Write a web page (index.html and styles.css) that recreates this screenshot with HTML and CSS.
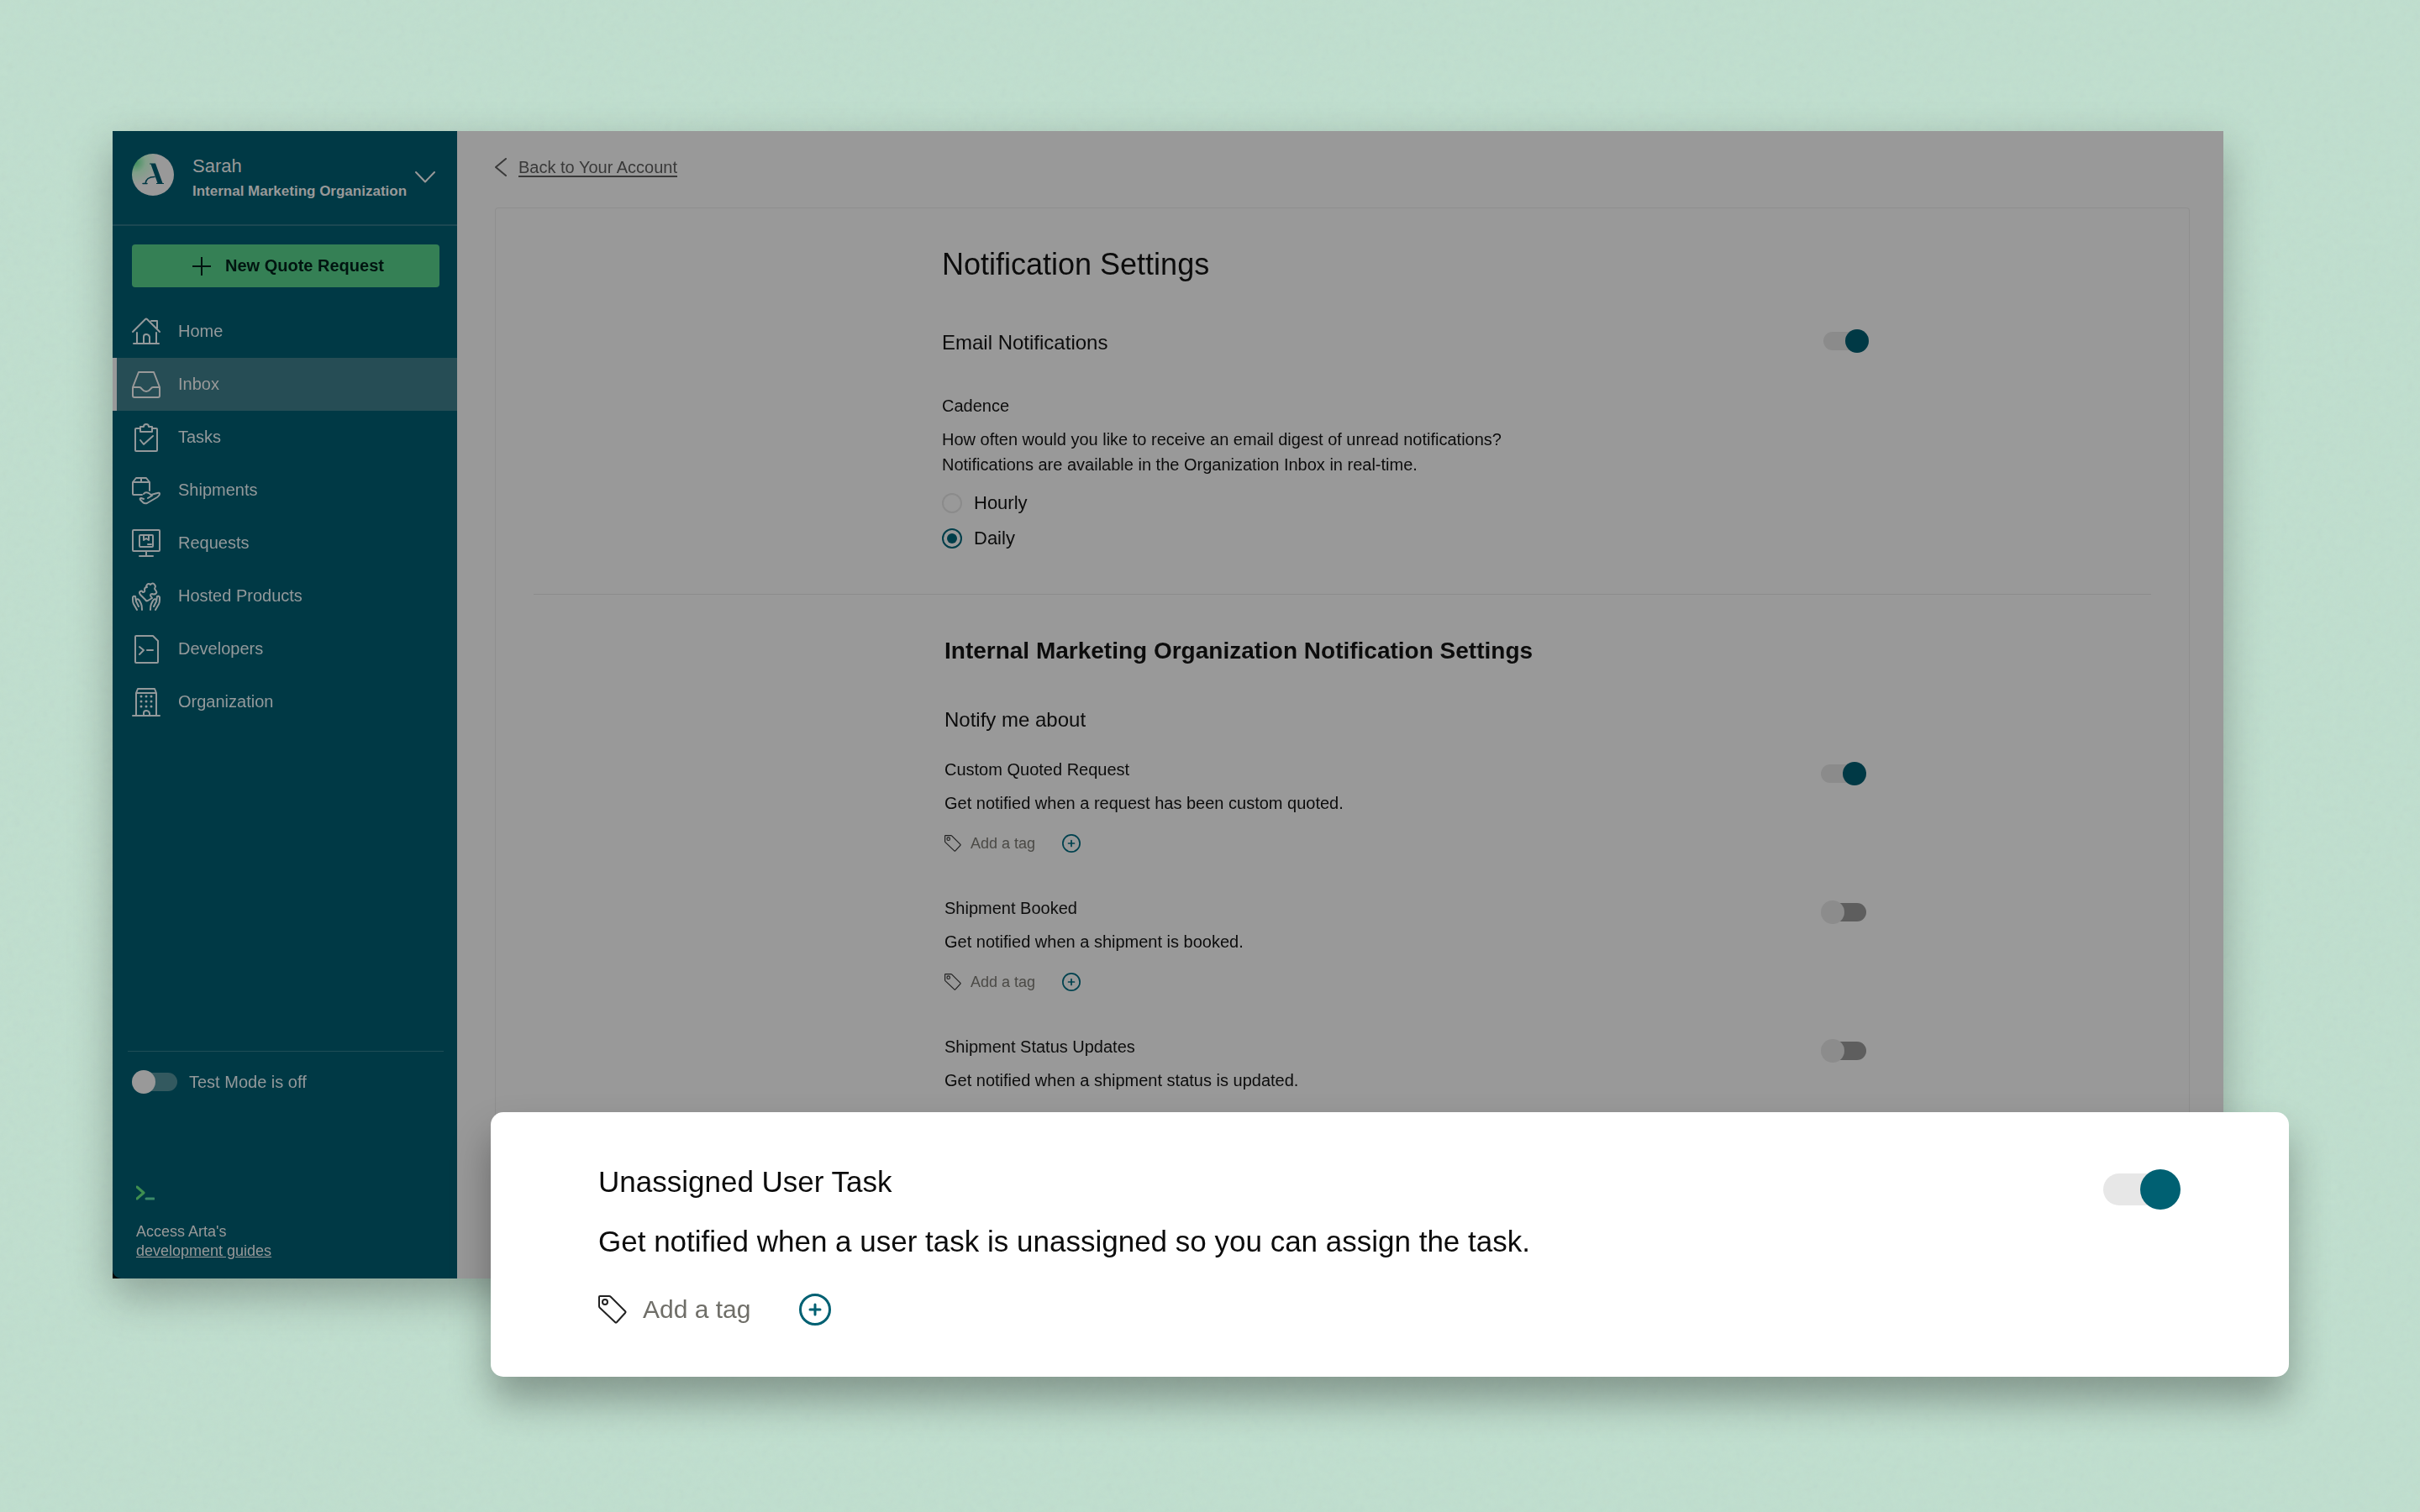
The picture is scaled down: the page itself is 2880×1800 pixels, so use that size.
FILE: index.html
```html
<!DOCTYPE html>
<html lang="en">
<head>
    <meta charset="UTF-8">
    <meta name="viewport" content="width=device-width, initial-scale=1.0">
    <title>Arta - Notification Settings</title>
    <link rel="stylesheet" href="styles.css">
</head>
<body>
    <!-- Paper grain -->
    <svg class="paper" aria-hidden="true">
        <filter id="grain">
            <feTurbulence type="fractalNoise" baseFrequency="0.12" numOctaves="3" stitchTiles="stitch"/>
            <feColorMatrix type="saturate" values="0.4"/>
        </filter>
        <rect width="100%" height="100%" filter="url(#grain)"/>
    </svg>

    <!-- Shared icons -->
    <svg class="sprite" aria-hidden="true">
        <symbol id="icon-tag" viewBox="0 0 34 34">
            <path d="M1 2q0-1 1-1h11q1 0 2 1l17 17q1 1 0 2L22 32q-1 1-2 0L2 15q-1-1-1-2z"/>
            <circle cx="8" cy="8" r="3"/>
        </symbol>
        <symbol id="icon-add" viewBox="0 0 38 38">
            <circle cx="19" cy="19" r="17.500"/>
            <path d="M19 13v12M13 19h12"/>
        </symbol>
    </svg>

    <div class="window">
        <!-- Sidebar -->
        <aside class="sidebar">
            <button class="account" type="button">
                <svg class="avatar" viewBox="0 0 50 50" aria-hidden="true">
                    <defs>
                        <radialGradient id="avatarFill" cx="0.08" cy="0.2" r="0.55">
                            <stop offset="0" stop-color="#3f8f5c"/>
                            <stop offset="0.45" stop-color="#7f9f88"/>
                            <stop offset="1" stop-color="#999999"/>
                        </radialGradient>
                    </defs>
                    <circle cx="25" cy="25" r="25" fill="url(#avatarFill)"/>
                    <path d="M21 11.500h7l8.500 23.500h1.500v1h-9v-1h1.500l-8-22.500h-1.500z" fill="#003945"/>
                    <path d="M16 35.500q1-8 11-8M13 35.500h5" fill="none" stroke="#003945" stroke-width="1.500"/>
                </svg>
                <span class="account-text">
                    <span class="account-name">Sarah</span>
                    <span class="account-org">Internal Marketing Organization</span>
                </span>
                <svg class="account-arrow" viewBox="0 0 24 14" aria-hidden="true"><path d="M1 1l11 11.500L23 1"/></svg>
            </button>

            <button class="new-quote" type="button">
                <svg viewBox="0 0 22 22" aria-hidden="true"><path d="M11 0v22M0 11h22"/></svg>
                New Quote Request
            </button>

            <nav class="nav">
                <a href="#home">
                    <svg viewBox="0 0 34 34" aria-hidden="true"><path d="M1 17L16 2q1-1 2 0l15 15M23 4h7v9M6 18v12M29 18v12M2 31h30M14 31v-8q0-3 3-3t4 3v8"/></svg>
                    Home
                </a>
                <a href="#inbox" class="active">
                    <svg viewBox="0 0 34 34" aria-hidden="true"><path d="M8 2h18l7 18v10q0 2-2 2H3q-2 0-2-2V20zM1 20h8c3 0 3 5 8 5s5-5 8-5h8"/></svg>
                    Inbox
                </a>
                <a href="#tasks">
                    <svg viewBox="0 0 34 34" aria-hidden="true"><path d="M9 6H5q-1 0-1 1v25q0 1 1 1h24q1 0 1-1V7q0-1-1-1h-4M10 4h4q0-3 3-3t3 3h4v6H10zM10 20l4 5 11-10"/></svg>
                    Tasks
                </a>
                <a href="#shipments">
                    <svg viewBox="0 0 34 34" aria-hidden="true"><path d="M12 22H2q-1 0-1-1V7l4-5h12l4 5v10M1 7h20M11 2v5M14 21q2-3 6-1l4 3-5 3M23 22l7-2q3-1 3 1t-3 4l-12 7q-3 1-5-1l-3-3q-1-2 1-2l3 1"/></svg>
                    Shipments
                </a>
                <a href="#requests">
                    <svg viewBox="0 0 34 34" aria-hidden="true"><rect x="1" y="1" width="32" height="25" rx="1"/><rect x="9" y="7" width="16" height="14" rx="1"/><path d="M14 7v6l3-2 3 2V7M19 18h4M17 26v6M9 32h16"/></svg>
                    Requests
                </a>
                <a href="#hosted-products">
                    <svg viewBox="0 0 34 34" aria-hidden="true"><path d="M17 5l1-2q2-2 4 0 3-3 5 0l1 2-1 3 2 3q1 2-1 3t-4 0q-2 0-2 2l2 3-5 3q-2 1-3-1l-6-6q-2-3 0-4 2-1 3 1 3 0 2-3 0-3 3-3zM6 33l-4-7q-1-2-1-5v-3q1-2 3-1l1 6 3 6M5 21q2-2 4 1l2 4q1 2 1 7M28 33l4-7q1-2 1-5v-3q-1-2-3-1l-1 6-3 6M29 21q-2-2-4 1l-2 4q-1 2-1 7"/></svg>
                    Hosted Products
                </a>
                <a href="#developers">
                    <svg viewBox="0 0 34 34" aria-hidden="true"><path d="M5 1h20l6 6v25q0 1-1 1H5q-1 0-1-1V2q0-1 1-1zM9 14l5 4-5 5M18 18h7"/></svg>
                    Developers
                </a>
                <a href="#organization">
                    <svg viewBox="0 0 34 34" aria-hidden="true"><path d="M5 33V6l2-5h20l2 5v27M5 6h24M1 33h32M14 33v-3q0-3 3-3t4 3v3"/><path class="windows" d="M11 10h0M17 10h0M23 10h0M11 16h0M17 16h0M23 16h0M11 22h0M17 22h0M23 22h0"/></svg>
                    Organization
                </a>
            </nav>

            <div class="sidebar-footer">
                <label class="test-mode">
                    <input type="checkbox" class="toggle">
                    Test Mode is off
                </label>
                <svg class="prompt" viewBox="0 0 22 18" aria-hidden="true"><path d="M1 2l8 7-8 7" stroke="#3f8f50"/><path d="M12 16h9" stroke="#3c8a69"/></svg>
                <p class="guides">Access Arta's<br><a href="#guides">development guides</a></p>
            </div>
        </aside>

        <!-- Settings page -->
        <main class="main">
            <a class="back" href="#account">
                <svg viewBox="0 0 14 22" aria-hidden="true"><path d="M13 1L1 11l12 10"/></svg>
                <span>Back to Your Account</span>
            </a>

            <div class="card">
                <section class="personal">
                    <h1>Notification Settings</h1>
                    <div class="row">
                        <label for="email">Email Notifications</label>
                        <input type="checkbox" class="toggle" id="email" checked>
                    </div>
                    <h3>Cadence</h3>
                    <p class="cadence-text">How often would you like to receive an email digest of unread notifications?<br>Notifications are available in the Organization Inbox in real-time.</p>
                    <div class="radios">
                        <label><input type="radio" name="cadence"> Hourly</label>
                        <label><input type="radio" name="cadence" checked> Daily</label>
                    </div>
                </section>

                <hr>

                <section class="organization">
                    <h2>Internal Marketing Organization Notification Settings</h2>
                    <p class="about">Notify me about</p>

                    <div class="item">
                        <div>
                            <label for="quoted">Custom Quoted Request</label>
                            <p>Get notified when a request has been custom quoted.</p>
                            <div class="tags">
                                <svg class="tag-icon" aria-hidden="true"><use href="#icon-tag"/></svg>
                                <span>Add a tag</span>
                                <button type="button" aria-label="Add a tag"><svg aria-hidden="true"><use href="#icon-add"/></svg></button>
                            </div>
                        </div>
                        <input type="checkbox" class="toggle" id="quoted" checked>
                    </div>

                    <div class="item">
                        <div>
                            <label for="booked">Shipment Booked</label>
                            <p>Get notified when a shipment is booked.</p>
                            <div class="tags">
                                <svg class="tag-icon" aria-hidden="true"><use href="#icon-tag"/></svg>
                                <span>Add a tag</span>
                                <button type="button" aria-label="Add a tag"><svg aria-hidden="true"><use href="#icon-add"/></svg></button>
                            </div>
                        </div>
                        <input type="checkbox" class="toggle" id="booked">
                    </div>

                    <div class="item">
                        <div>
                            <label for="status">Shipment Status Updates</label>
                            <p>Get notified when a shipment status is updated.</p>
                        </div>
                        <input type="checkbox" class="toggle" id="status">
                    </div>
                </section>
            </div>
        </main>

        <!-- Highlighted setting, floats over the window -->
        <div class="popup">
            <div>
                <label for="unassigned">Unassigned User Task</label>
                <p>Get notified when a user task is unassigned so you can assign the task.</p>
                <div class="tags">
                    <svg class="tag-icon" aria-hidden="true"><use href="#icon-tag"/></svg>
                    <span>Add a tag</span>
                    <button type="button" aria-label="Add a tag"><svg aria-hidden="true"><use href="#icon-add"/></svg></button>
                </div>
            </div>
            <input type="checkbox" class="toggle" id="unassigned" checked>
        </div>
    </div>
</body>
</html>
```

FILE: styles.css
```css
/* Base Styles */
* {
    box-sizing: border-box;
}

body {
    margin: 0;
    padding: 156px 234px 278px 134px;
    min-height: 100vh;
    display: flex;
    font-family: "Liberation Sans", Arial, sans-serif;
    font-size: 20px;
    color: #0c0c0c;
    background: #c0dfcf;
}

h1, h2, h3, p {
    margin: 0;
    font-weight: 400;
}

a {
    color: inherit;
}

button {
    font: inherit;
    border: none;
    padding: 0;
    background: none;
    cursor: pointer;
}

svg {
    display: block;
    fill: none;
    stroke: currentColor;
    stroke-width: 2;
    stroke-linecap: round;
    stroke-linejoin: round;
}

.paper {
    position: fixed;
    top: 0;
    left: 0;
    width: 100%;
    height: 100%;
    z-index: -1;
    opacity: 0.06;
    stroke: none;
}

.sprite {
    position: absolute;
    width: 0;
    height: 0;
}

/* App window */
.window {
    position: relative;
    flex: 1;
    display: flex;
    background: #000;
    box-shadow: 0 20px 48px rgba(0, 0, 0, 0.28);
}

/* Sidebar */
.sidebar {
    width: 410px;
    flex-shrink: 0;
    display: flex;
    flex-direction: column;
    background: #003945;
    color: #93999b;
    border-bottom-left-radius: 10px;
}

.account {
    display: flex;
    align-items: flex-start;
    height: 113px;
    padding: 27px 26px 0 23px;
    color: #999;
    text-align: left;
    border-bottom: 2px solid #1b4852;
}

.avatar {
    width: 50px;
    height: 50px;
    margin-right: 22px;
    stroke: none;
}

.account-text {
    flex: 1;
    display: flex;
    flex-direction: column;
    gap: 3px;
}

.account-name {
    font-size: 22px;
    line-height: 30px;
}

.account-org {
    font-size: 17px;
    line-height: 24px;
    font-weight: 700;
    white-space: nowrap;
}

.account-arrow {
    width: 24px;
    height: 56px;
}

.new-quote {
    display: flex;
    align-items: center;
    justify-content: center;
    gap: 17px;
    height: 51px;
    margin: 22px 21px 21px 23px;
    padding-left: 6px;
    border-radius: 4px;
    background: #358055;
    color: #001410;
    font-weight: 700;
}

.new-quote svg {
    width: 22px;
    height: 22px;
}

.nav a {
    display: flex;
    align-items: center;
    gap: 21px;
    height: 63px;
    padding-left: 23px;
    text-decoration: none;
}

.nav svg {
    width: 34px;
    height: 34px;
}

.nav .windows {
    stroke-width: 3;
}

.nav .active {
    padding-left: 18px;
    border-left: 5px solid #999;
    background: #264d55;
    color: #999;
}

.sidebar-footer {
    margin: auto 16px 0 18px;
    padding: 22px 5px 21px;
    border-top: 1px solid #1f4d57;
}

.test-mode {
    display: flex;
    align-items: center;
    gap: 14px;
    margin-bottom: 109px;
}

.prompt {
    width: 22px;
    height: 18px;
    margin: 0 5px 26px;
    stroke-width: 3;
}

.guides {
    margin: 0 5px;
    font-size: 18px;
    line-height: 23px;
    color: #999;
}

/* Main */
.main {
    flex: 1;
    display: flex;
    flex-direction: column;
    padding: 31px 40px 0 45px;
    background: #999;
}

.back {
    display: flex;
    align-items: center;
    align-self: flex-start;
    gap: 14px;
    line-height: 24px;
    margin-bottom: 36px;
    color: #393939;
    text-decoration: none;
}

.back svg {
    width: 14px;
    height: 22px;
}

.back span {
    text-decoration: underline;
    text-underline-offset: 3px;
}

.card {
    flex: 1;
    border: 1px solid #8f8f8f;
    border-bottom: none;
    border-radius: 4px 4px 0 0;
}

.card hr {
    height: 1px;
    margin: 0 45px;
    border: none;
    background: #8c8c8c;
}

.personal {
    padding: 45px 381px 50px 531px;
}

h1 {
    font-size: 36px;
    line-height: 44px;
    margin-bottom: 55px;
}

.row {
    display: flex;
    justify-content: space-between;
    margin-bottom: 44px;
    font-size: 24px;
    line-height: 32px;
}

h3 {
    font-size: 20px;
    line-height: 30px;
    margin-bottom: 10px;
}

.cadence-text {
    line-height: 30px;
    margin-bottom: 15px;
}

.radios {
    display: flex;
    flex-direction: column;
    gap: 10px;
    font-size: 22px;
    line-height: 32px;
}

.radios label {
    display: flex;
    align-items: center;
    gap: 14px;
}

.radios input {
    appearance: none;
    display: grid;
    place-items: center;
    width: 24px;
    height: 24px;
    margin: 0;
    border: 2px solid #8b8b8b;
    border-radius: 50%;
}

.radios input:checked {
    border-color: #003e4a;
}

.radios input:checked::before {
    content: "";
    width: 12px;
    height: 12px;
    border-radius: 50%;
    background: #003e4a;
}

.organization {
    padding: 49px 384px 0 534px;
}

h2 {
    font-size: 28px;
    line-height: 36px;
    font-weight: 700;
    margin-bottom: 48px;
}

.about {
    font-size: 24px;
    line-height: 32px;
    margin-bottom: 28px;
}

.item {
    display: flex;
    justify-content: space-between;
    margin-bottom: 51px;
    line-height: 30px;
}

.item:last-child {
    margin-bottom: 0;
}

.item p {
    margin: 10px 0 22px;
}

.item .toggle {
    margin-top: 6px;
}

.tags {
    display: flex;
    align-items: center;
    color: #4b4a46;
    font-size: 18px;
    line-height: 22px;
}

.tag-icon {
    width: 20px;
    height: 20px;
    margin-right: 11px;
    color: #222;
}

.tags button {
    margin-left: 32px;
    color: #00424f;
}

.tags button svg {
    width: 22px;
    height: 22px;
    stroke-width: 3;
}

/* Toggle */
.toggle {
    appearance: none;
    display: grid;
    align-items: center;
    flex-shrink: 0;
    width: 54px;
    height: 28px;
    margin: 0;
    cursor: pointer;
}

.toggle::before,
.toggle::after {
    content: "";
    grid-area: 1 / 1;
    border-radius: 20px;
}

.toggle::before {
    width: 50px;
    height: 22px;
    justify-self: end;
    background: #5e5e5e;
}

.toggle::after {
    width: 28px;
    height: 28px;
    background: #8c8c8c;
}

.toggle:checked::before {
    justify-self: start;
    background: #8b8b8b;
}

.toggle:checked::after {
    justify-self: end;
    background: #003945;
}

.test-mode .toggle::before {
    background: #33595f;
}

.test-mode .toggle::after {
    background: #999;
}

/* Popup */
.popup {
    position: absolute;
    left: 450px;
    right: -78px;
    bottom: -117px;
    display: flex;
    justify-content: space-between;
    padding: 61px 129px 61px 128px;
    border-radius: 15px;
    background: #fff;
    box-shadow: 0 28px 48px rgba(0, 0, 0, 0.32);
    font-size: 35px;
    line-height: 44px;
}

.popup label {
    display: block;
}

.popup p {
    margin: 27px 0 40px;
}

.popup .tags {
    color: #6f6e68;
    font-size: 30px;
    line-height: 38px;
}

.popup .tag-icon {
    width: 34px;
    height: 34px;
    margin-right: 19px;
}

.popup .tags button {
    margin-left: 58px;
    color: #006072;
}

.popup .tags button svg {
    width: 38px;
    height: 38px;
}

.popup .toggle {
    width: 92px;
    height: 48px;
    margin-top: 7px;
}

.popup .toggle::before {
    width: 80px;
    height: 38px;
    background: #e7e7e7;
}

.popup .toggle::after {
    width: 48px;
    height: 48px;
    border-radius: 50%;
    background: #006072;
}
```
